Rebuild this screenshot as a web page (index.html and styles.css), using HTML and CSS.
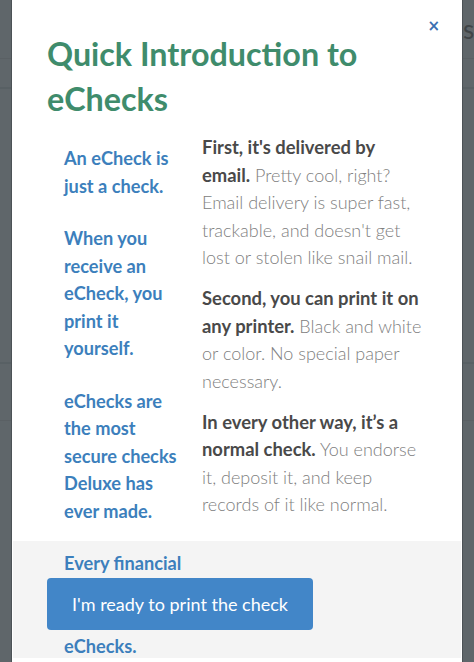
FILE: index.html
```html
<!DOCTYPE html>
<html lang="en">
<head>
<meta charset="utf-8">
<title>Quick Introduction to eChecks</title>
<link rel="stylesheet" href="styles.css">
</head>
<body>
<div class="page">
  <div class="side side-left"></div>
  <div class="modal">
    <div class="modal-header">
      <h1 class="title">Quick Introduction to eChecks</h1>
      <button class="close" aria-label="Close">×</button>
    </div>
    <div class="modal-body">
      <div class="col-left">
        <p>An eCheck is just a check.</p>
        <p>When you receive an eCheck, you print it yourself.</p>
        <p>eChecks are the most secure checks Deluxe has ever made.</p>
        <p>Every financial institution accepts eChecks.</p>
      </div>
      <div class="col-right">
        <p><strong>First, it's delivered by email.</strong> Pretty cool, right? Email delivery is super fast, trackable, and doesn't get lost or stolen like snail mail.</p>
        <p><strong>Second, you can print it on any printer.</strong> Black and white or color. No special paper necessary.</p>
        <p><strong>In every other way, it’s a normal check.</strong> You endorse it, deposit it, and keep records of it like normal.</p>
      </div>
    </div>
    <div class="modal-footer">
      <button class="primary">I'm ready to print the check</button>
    </div>
  </div>
  <div class="side side-right"><span class="peek">s</span></div>
</div>
</body>
</html>
```

FILE: styles.css
```css
* { box-sizing: border-box; }
html, body { margin: 0; padding: 0; }
body {
  background: #5e6569;
  font-family: Lato, "Open Sans", sans-serif;
  height: 662px;
  overflow: hidden;
}
.page {
  display: flex;
  height: 662px;
}
.side {
  flex: 1;
  background:
    linear-gradient(#5a6064, #5a6064) 0 58px / 100% 1px no-repeat,
    linear-gradient(#586064, #586064) 0 87px / 100% 2px no-repeat,
    linear-gradient(#586064, #586064) 0 362px / 100% 2px no-repeat,
    linear-gradient(#5a6064, #5a6064) 0 420px / 100% 1px no-repeat,
    #5f666a;
}
.side-left { border-right: 1px solid #4c5256; }
.side-right { border-left: 1px solid #4c5256; overflow: hidden; }
.peek {
  display: block;
  padding-top: 14px;
  font-size: 26px;
  color: #3f4447;
  line-height: 30px;
}
.modal {
  width: 450px;
  height: 662px;
  background: #fff;
  padding: 0 1px 4px;
}
.modal-header {
  display: flex;
  align-items: flex-start;
  padding: 31px 21px 0 34px;
}
.title {
  margin: 0;
  flex: 1;
  font-size: 32.3px;
  line-height: 45px;
  font-weight: 700;
  color: #3f8c6c;
}
.close {
  border: 0;
  background: none;
  padding: 0;
  margin-top: -15px;
  font-family: "DejaVu Sans", sans-serif;
  font-size: 15px;
  line-height: 20px;
  color: #3a6fb2;
  font-weight: 700;
}
.modal-body {
  height: 420px;
  display: flex;
  gap: 18px;
  padding: 13px 10px 0 51px;
}
.col-left {
  position: relative;
  z-index: 1;
  width: 120px;
  flex: none;
  padding-top: 11px;
  color: #3c7fbc;
  font-weight: 700;
  font-size: 18.2px;
  line-height: 27.5px;
}
.col-left p { margin: 0 0 25px; }
.col-right {
  width: 223px;
  flex: none;
  color: #808080;
  font-weight: 300;
  font-size: 18px;
  line-height: 27.5px;
}
.col-right p { margin: 0 0 13.5px; }
.col-right strong { font-weight: 700; color: #494949; font-size: 18.4px; }
.modal-footer {
  height: 117px;
  background: #f4f4f4;
  padding: 37px 0 0 34px;
}
.primary {
  position: relative;
  z-index: 2;
  width: 266px;
  height: 52px;
  border: 0;
  border-radius: 4px;
  background: #4286c8;
  color: #fff;
  font-family: Lato, sans-serif;
  font-size: 18px;
  font-weight: 400;
  padding: 0;
}
```
